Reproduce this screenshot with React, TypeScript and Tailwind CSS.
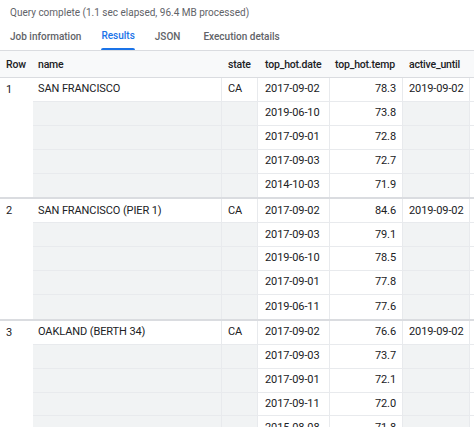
import React from "react";

type Group = { row: string; name: string; state: string; active: string; sub: [string, string][] };

const groups: Group[] = [
  {
    row: "1",
    name: "SAN FRANCISCO",
    state: "CA",
    active: "2019-09-02",
    sub: [
      ["2017-09-02", "78.3"],
      ["2019-06-10", "73.8"],
      ["2017-09-01", "72.8"],
      ["2017-09-03", "72.7"],
      ["2014-10-03", "71.9"],
    ],
  },
  {
    row: "2",
    name: "SAN FRANCISCO (PIER 1)",
    state: "CA",
    active: "2019-09-02",
    sub: [
      ["2017-09-02", "84.6"],
      ["2017-09-03", "79.1"],
      ["2019-06-10", "78.5"],
      ["2017-09-01", "77.8"],
      ["2019-06-11", "77.6"],
    ],
  },
  {
    row: "3",
    name: "OAKLAND (BERTH 34)",
    state: "CA",
    active: "2019-09-02",
    sub: [
      ["2017-09-02", "76.6"],
      ["2017-09-03", "73.7"],
      ["2017-09-01", "72.1"],
      ["2017-09-11", "72.0"],
      ["2015-08-08", "71.8"],
    ],
  },
];

function Group({ g }: { g: Group }) {
  return (
    <div className="flex border-b-2 border-[#dadce0]">
      <div className="w-[33px] shrink-0 bg-white text-[11px]">
        <div className="h-[23.9px] flex items-center pl-[6px]">{g.row}</div>
      </div>
      <div className="flex flex-col flex-1">
        {g.sub.map(([d, t], i) => {
          const first = i === 0;
          const fill = first ? "bg-white" : "bg-[#f1f3f4]";
          return (
            <div
              key={i}
              className={`flex h-[23.9px] items-center text-[11px] tracking-[-0.1px] whitespace-nowrap ${i < g.sub.length - 1 ? "border-b border-[#e8eaed]" : ""}`}
            >
              <div className={`w-[189px] h-full flex items-center pl-[5px] border-r border-[#e8eaed] ${fill}`}>
                {first ? g.name : ""}
              </div>
              <div className={`w-[36px] h-full flex items-center pl-[6px] border-r border-[#e8eaed] ${fill}`}>
                {first ? g.state : ""}
              </div>
              <div className="w-[72px] h-full flex items-center pl-[7px] border-r border-[#e8eaed] bg-white">{d}</div>
              <div className="w-[73px] h-full flex items-center justify-end pr-[6px] border-r border-[#e8eaed] bg-white">
                {t}
              </div>
              <div className={`w-[67px] h-full flex items-center pl-[6px] border-r border-[#e8eaed] ${fill}`}>
                {first ? g.active : ""}
              </div>
              <div className="flex-1 h-full bg-white" />
            </div>
          );
        })}
      </div>
    </div>
  );
}

export default function App() {
  return (
    <div
      className="w-[474px] h-[427px] overflow-hidden bg-white text-[#202124]"
      style={{ fontFamily: "Roboto, 'Liberation Sans', sans-serif" }}
    >
      <div className="pl-[10px] pt-[5px] h-[22px] text-[10px] leading-[16px] text-[#5f6368]">
        Query complete (1.1 sec elapsed, 96.4 MB processed)
      </div>
      <div className="flex h-[28px] pl-[10px] text-[10px] text-[#5f6368] gap-[20px] whitespace-nowrap">
        <div className="flex flex-col justify-center h-full pt-[1px] font-medium">Job information</div>
        <div className="flex flex-col h-full text-[#1a73e8] font-medium">
          <div className="flex-1 flex items-center pt-[1px]">Results</div>
          <div className="h-[2px] bg-[#1a73e8] rounded-t-sm" />
        </div>
        <div className="flex flex-col justify-center h-full pt-[1px] font-medium">JSON</div>
        <div className="flex flex-col justify-center h-full pt-[1px] pl-[3px] font-medium">Execution details</div>
      </div>
      <div className="border-t border-[#dadce0]">
        <div className="flex h-[27px] items-center pt-[1px] bg-[#f8f9fa] text-[10.5px] tracking-[-0.2px] font-medium border-b border-[#dadce0] whitespace-nowrap">
          <div className="w-[33px] pl-[6px]">Row</div>
          <div className="w-[189px] pl-[5px]">name</div>
          <div className="w-[36px] pl-[6px]">state</div>
          <div className="w-[72px] pl-[7px]">top_hot.date</div>
          <div className="w-[73px] pl-[5px]">top_hot.temp</div>
          <div className="w-[67px] pl-[6px]">active_until</div>
        </div>
        {groups.map((g) => (
          <Group key={g.row} g={g} />
        ))}
      </div>
    </div>
  );
}
